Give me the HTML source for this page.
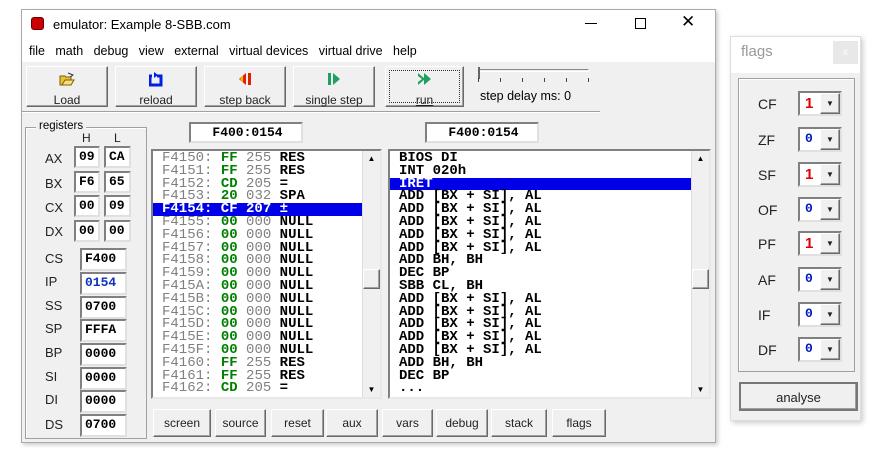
<!DOCTYPE html>
<html><head><meta charset="utf-8"><style>
*{margin:0;padding:0;box-sizing:border-box}
body{width:876px;height:449px;background:#fff;position:relative;overflow:hidden;font-family:"Liberation Sans",sans-serif;font-size:12px;color:#000}
.a{position:absolute}
.btn{position:absolute;background:#f0f0f0;border:1px solid;border-color:#fff #696969 #696969 #fff;box-shadow:inset -1px -1px 0 #a0a0a0;text-align:center;font-size:12px;color:#222}
.lbl{position:absolute;font-size:13px;color:#222}
.rb{position:absolute;background:#fff;border:2px solid;border-color:#808080 #e0e0e0 #e0e0e0 #808080;font-family:"Liberation Mono",monospace;font-weight:bold;font-size:13px;padding-left:3px;line-height:17px}
.list{position:absolute;background:#fff;border:2px solid;border-color:#808080 #e8e8e8 #e8e8e8 #808080;overflow:hidden}
.ln{height:12.8px;line-height:13px;white-space:pre;font-family:"Liberation Mono",monospace;font-weight:bold;font-size:14px;padding-left:9px}
.g{color:#808080;font-weight:normal}.gr{color:#008000}
.sel{background:#0000e8;color:#fff}
.sb{position:absolute;background:#f0f0f0;border-left:1px solid #ddd}
.cb{position:absolute;width:44px;height:25px;background:#fff;border:2px solid;border-color:#808080 #e0e0e0 #e0e0e0 #808080}
.ti{margin-top:4px;height:16px}
.tt{margin-top:3px}
</style></head><body>
<div class="a" style="left:21px;top:9px;width:695px;height:434px;background:#f0f0f0;border:1px solid #aaa;box-shadow:2px 2px 4px #ccc"></div>
<div class="a" style="left:22px;top:10px;width:693px;height:52px;background:#fff"></div>
<div class="a" style="left:32px;top:18px;width:11px;height:11px;background:#c00;border-radius:2px;box-shadow:0 0 0 1px #600"></div>
<div class="a" style="left:53px;top:17px;font-size:13px">emulator: Example 8-SBB.com</div>
<div class="a" style="left:585px;top:23px;width:12px;height:1px;background:#000"></div>
<div class="a" style="left:635px;top:18px;width:11px;height:11px;border:1px solid #000"></div>
<div class="a" style="left:681px;top:12px;font-size:17px">✕</div>
<div class="a" style="left:29px;top:44px;font-size:12.5px">file&nbsp;&nbsp; math&nbsp;&nbsp; debug&nbsp;&nbsp; view&nbsp;&nbsp; external&nbsp;&nbsp; virtual devices&nbsp;&nbsp; virtual drive&nbsp;&nbsp; help</div>
<div class="btn" style="left:26px;top:66px;width:82px;height:41px"><svg class="ti" width="16" height="14" viewBox="0 0 16 14"><path d="M1 4 H6 L7 5 H12 V13 H1Z" fill="#e8c040" stroke="#806000"/><path d="M3 13 L6 8 H15 L12 13Z" fill="#f8e080" stroke="#806000"/><path d="M9 1 L14 3 L11 5" fill="none" stroke="#333"/></svg><div class="tt">Load</div></div>
<div class="btn" style="left:115px;top:66px;width:82px;height:41px"><svg class="ti" width="14" height="16" viewBox="0 0 14 16"><path d="M3 5 H1 V14 H12 V5 H8" fill="none" stroke="#0020e0" stroke-width="3"/><path d="M5 1 L9 4 L5 7Z" fill="#0020e0"/></svg><div class="tt">reload</div></div>
<div class="btn" style="left:204px;top:66px;width:82px;height:41px"><svg class="ti" width="16" height="14" viewBox="0 0 16 14"><path d="M9 1 L2 7 L9 13Z" fill="#e02000"/><path d="M6 3.5 L6 10.5 L3 7Z" fill="#f0c000"/><rect x="11" y="1" width="3" height="12" fill="#e02000"/></svg><div class="tt">step back</div></div>
<div class="btn" style="left:293px;top:66px;width:82px;height:41px"><svg class="ti" width="16" height="14" viewBox="0 0 16 14"><rect x="2" y="1" width="3" height="12" fill="#20a060"/><path d="M7 1 L14 7 L7 13Z" fill="#20a060"/></svg><div class="tt">single step</div></div>
<div class="btn" style="left:385px;top:66px;width:79px;height:41px"><div class="a" style="left:3px;top:3px;right:3px;bottom:3px;border:1px dotted #333"></div><svg class="ti" width="18" height="14" viewBox="0 0 18 14"><path d="M2 1 L9 7 L2 13 L2 10 L6 7 L2 4Z M8 1 L15 7 L8 13Z" fill="#20a060"/></svg><div class="tt" style="text-decoration:underline">run</div></div>
<div class="a" style="left:478px;top:69px;width:111px;height:3px;border:1px solid;border-color:#888 #fff #fff #888"></div>
<div class="a" style="left:478px;top:67px;width:2px;height:12px;background:#666"></div>
<div class="a" style="left:478px;top:78px;width:112px;height:4px;background:repeating-linear-gradient(90deg,#444 0 1px,transparent 1px 22px)"></div>
<div class="a" style="left:480px;top:89px;font-size:12.5px">step delay ms: 0</div>
<div class="a" style="left:22px;top:111px;width:578px;height:2px;border-top:1px solid #a0a0a0;border-bottom:1px solid #fff"></div>
<div class="a" style="left:25px;top:127px;width:122px;height:312px;border:1px solid #a0a0a0;box-shadow:1px 1px 0 #fff inset"></div>
<div class="a" style="left:36px;top:120px;background:#f0f0f0;padding:0 3px;font-size:11.5px">registers</div>
<div class="lbl" style="left:82px;top:131px;font-size:12px">H</div>
<div class="lbl" style="left:114px;top:131px;font-size:12px">L</div>
<div class="lbl" style="left:45px;top:151px">AX</div><div class="rb" style="left:74px;top:146px;width:26px;height:22px">09</div><div class="rb" style="left:104px;top:146px;width:27px;height:22px">CA</div>
<div class="lbl" style="left:45px;top:176px">BX</div><div class="rb" style="left:74px;top:171px;width:26px;height:22px">F6</div><div class="rb" style="left:104px;top:171px;width:27px;height:22px">65</div>
<div class="lbl" style="left:45px;top:200px">CX</div><div class="rb" style="left:74px;top:195px;width:26px;height:22px">00</div><div class="rb" style="left:104px;top:195px;width:27px;height:22px">09</div>
<div class="lbl" style="left:45px;top:224px">DX</div><div class="rb" style="left:74px;top:220px;width:26px;height:22px">00</div><div class="rb" style="left:104px;top:220px;width:27px;height:22px">00</div>
<div class="lbl" style="left:45px;top:251px">CS</div><div class="rb" style="left:80px;top:248px;width:47px;height:23px">F400</div>
<div class="lbl" style="left:45px;top:274px">IP</div><div class="rb" style="left:80px;top:272px;width:47px;height:23px;color:#1030c0">0154</div>
<div class="lbl" style="left:45px;top:298px">SS</div><div class="rb" style="left:80px;top:296px;width:47px;height:23px">0700</div>
<div class="lbl" style="left:45px;top:321px">SP</div><div class="rb" style="left:80px;top:319px;width:47px;height:23px">FFFA</div>
<div class="lbl" style="left:45px;top:345px">BP</div><div class="rb" style="left:80px;top:343px;width:47px;height:23px">0000</div>
<div class="lbl" style="left:45px;top:369px">SI</div><div class="rb" style="left:80px;top:367px;width:47px;height:23px">0000</div>
<div class="lbl" style="left:45px;top:392px">DI</div><div class="rb" style="left:80px;top:390px;width:47px;height:23px">0000</div>
<div class="lbl" style="left:45px;top:417px">DS</div><div class="rb" style="left:80px;top:414px;width:47px;height:23px">0700</div>
<div class="rb" style="left:189px;top:122px;width:114px;height:21px;text-align:center;font-size:13px">F400:0154</div>
<div class="rb" style="left:425px;top:122px;width:114px;height:21px;text-align:center;font-size:13px">F400:0154</div>
<div class="list" style="left:151px;top:149px;width:231px;height:250px;padding-top:1px">
<div class="ln"><span class="g">F4150:</span> <span class="gr">FF</span> <span class="g">255</span> RES</div>
<div class="ln"><span class="g">F4151:</span> <span class="gr">FF</span> <span class="g">255</span> RES</div>
<div class="ln"><span class="g">F4152:</span> <span class="gr">CD</span> <span class="g">205</span> =</div>
<div class="ln"><span class="g">F4153:</span> <span class="gr">20</span> <span class="g">032</span> SPA</div>
<div class="ln sel" style="margin-right:18px">F4154: CF 207 ±</div>
<div class="ln"><span class="g">F4155:</span> <span class="gr">00</span> <span class="g">000</span> NULL</div>
<div class="ln"><span class="g">F4156:</span> <span class="gr">00</span> <span class="g">000</span> NULL</div>
<div class="ln"><span class="g">F4157:</span> <span class="gr">00</span> <span class="g">000</span> NULL</div>
<div class="ln"><span class="g">F4158:</span> <span class="gr">00</span> <span class="g">000</span> NULL</div>
<div class="ln"><span class="g">F4159:</span> <span class="gr">00</span> <span class="g">000</span> NULL</div>
<div class="ln"><span class="g">F415A:</span> <span class="gr">00</span> <span class="g">000</span> NULL</div>
<div class="ln"><span class="g">F415B:</span> <span class="gr">00</span> <span class="g">000</span> NULL</div>
<div class="ln"><span class="g">F415C:</span> <span class="gr">00</span> <span class="g">000</span> NULL</div>
<div class="ln"><span class="g">F415D:</span> <span class="gr">00</span> <span class="g">000</span> NULL</div>
<div class="ln"><span class="g">F415E:</span> <span class="gr">00</span> <span class="g">000</span> NULL</div>
<div class="ln"><span class="g">F415F:</span> <span class="gr">00</span> <span class="g">000</span> NULL</div>
<div class="ln"><span class="g">F4160:</span> <span class="gr">FF</span> <span class="g">255</span> RES</div>
<div class="ln"><span class="g">F4161:</span> <span class="gr">FF</span> <span class="g">255</span> RES</div>
<div class="ln"><span class="g">F4162:</span> <span class="gr">CD</span> <span class="g">205</span> =</div>
<div class="sb" style="right:0;top:0;width:18px;height:246px"><div style="text-align:center;font-size:8px;margin-top:3px">▲</div><div class="btn" style="left:0;top:118px;width:17px;height:20px"></div><div style="position:absolute;bottom:3px;width:17px;text-align:center;font-size:8px">▼</div></div>
</div>
<div class="list" style="left:388px;top:149px;width:323px;height:250px;padding-top:1px">
<div class="ln">BIOS DI</div>
<div class="ln">INT 020h</div>
<div class="ln sel" style="margin-right:18px">IRET</div>
<div class="ln">ADD [BX + SI], AL</div>
<div class="ln">ADD [BX + SI], AL</div>
<div class="ln">ADD [BX + SI], AL</div>
<div class="ln">ADD [BX + SI], AL</div>
<div class="ln">ADD [BX + SI], AL</div>
<div class="ln">ADD BH, BH</div>
<div class="ln">DEC BP</div>
<div class="ln">SBB CL, BH</div>
<div class="ln">ADD [BX + SI], AL</div>
<div class="ln">ADD [BX + SI], AL</div>
<div class="ln">ADD [BX + SI], AL</div>
<div class="ln">ADD [BX + SI], AL</div>
<div class="ln">ADD [BX + SI], AL</div>
<div class="ln">ADD BH, BH</div>
<div class="ln">DEC BP</div>
<div class="ln">...</div>
<div class="sb" style="right:0;top:0;width:18px;height:246px"><div style="text-align:center;font-size:8px;margin-top:3px">▲</div><div class="btn" style="left:0;top:118px;width:17px;height:20px"></div><div style="position:absolute;bottom:3px;width:17px;text-align:center;font-size:8px">▼</div></div>
</div>
<div class="btn" style="left:153px;top:409px;width:58px;height:28px;line-height:26px">screen</div>
<div class="btn" style="left:215px;top:409px;width:51px;height:28px;line-height:26px">source</div>
<div class="btn" style="left:271px;top:409px;width:53px;height:28px;line-height:26px">reset</div>
<div class="btn" style="left:326px;top:409px;width:52px;height:28px;line-height:26px">aux</div>
<div class="btn" style="left:382px;top:409px;width:51px;height:28px;line-height:26px">vars</div>
<div class="btn" style="left:436px;top:409px;width:52px;height:28px;line-height:26px">debug</div>
<div class="btn" style="left:491px;top:409px;width:56px;height:28px;line-height:26px">stack</div>
<div class="btn" style="left:552px;top:409px;width:54px;height:28px;line-height:26px">flags</div>
<div class="a" style="left:730px;top:36px;width:131px;height:385px;background:#f0f0f0;border:1px solid #ddd;box-shadow:2px 2px 5px #ccc"></div>
<div class="a" style="left:731px;top:37px;width:129px;height:36px;background:#fff"></div>
<div class="a" style="left:741px;top:43px;font-size:15px;color:#999">flags</div>
<div class="a" style="left:833px;top:41px;width:25px;height:23px;background:#e8e8e8;color:#fff;font-size:10px;text-align:center;line-height:23px">x</div>
<div class="a" style="left:738px;top:78px;width:117px;height:294px;border:1px solid #a0a0a0;box-shadow:inset 1px 1px 0 #fff"></div>
<div class="lbl" style="left:758px;top:96px;font-size:14px">CF</div><div class="cb" style="left:798px;top:91px"><span class="a" style="left:5px;top:2px;color:#e00000;font-weight:bold;font-size:15px">1</span><div class="btn" style="left:20px;top:0;width:20px;height:21px;font-size:8px;line-height:19px">▼</div></div>
<div class="lbl" style="left:758px;top:132px;font-size:14px">ZF</div><div class="cb" style="left:798px;top:127px"><span class="a" style="left:5px;top:2px;color:#0018c0;font-weight:bold;font-size:13px;font-family:'Liberation Mono'">0</span><div class="btn" style="left:20px;top:0;width:20px;height:21px;font-size:8px;line-height:19px">▼</div></div>
<div class="lbl" style="left:758px;top:167px;font-size:14px">SF</div><div class="cb" style="left:798px;top:162px"><span class="a" style="left:5px;top:2px;color:#e00000;font-weight:bold;font-size:15px">1</span><div class="btn" style="left:20px;top:0;width:20px;height:21px;font-size:8px;line-height:19px">▼</div></div>
<div class="lbl" style="left:758px;top:202px;font-size:14px">OF</div><div class="cb" style="left:798px;top:197px"><span class="a" style="left:5px;top:2px;color:#0018c0;font-weight:bold;font-size:13px;font-family:'Liberation Mono'">0</span><div class="btn" style="left:20px;top:0;width:20px;height:21px;font-size:8px;line-height:19px">▼</div></div>
<div class="lbl" style="left:758px;top:236px;font-size:14px">PF</div><div class="cb" style="left:798px;top:231px"><span class="a" style="left:5px;top:2px;color:#e00000;font-weight:bold;font-size:15px">1</span><div class="btn" style="left:20px;top:0;width:20px;height:21px;font-size:8px;line-height:19px">▼</div></div>
<div class="lbl" style="left:758px;top:272px;font-size:14px">AF</div><div class="cb" style="left:798px;top:267px"><span class="a" style="left:5px;top:2px;color:#0018c0;font-weight:bold;font-size:13px;font-family:'Liberation Mono'">0</span><div class="btn" style="left:20px;top:0;width:20px;height:21px;font-size:8px;line-height:19px">▼</div></div>
<div class="lbl" style="left:758px;top:307px;font-size:14px">IF</div><div class="cb" style="left:798px;top:302px"><span class="a" style="left:5px;top:2px;color:#0018c0;font-weight:bold;font-size:13px;font-family:'Liberation Mono'">0</span><div class="btn" style="left:20px;top:0;width:20px;height:21px;font-size:8px;line-height:19px">▼</div></div>
<div class="lbl" style="left:758px;top:342px;font-size:14px">DF</div><div class="cb" style="left:798px;top:337px"><span class="a" style="left:5px;top:2px;color:#0018c0;font-weight:bold;font-size:13px;font-family:'Liberation Mono'">0</span><div class="btn" style="left:20px;top:0;width:20px;height:21px;font-size:8px;line-height:19px">▼</div></div>
<div class="btn" style="left:739px;top:382px;width:119px;height:29px;line-height:27px;font-size:13px;border:2px solid #777">analyse</div>
</body></html>
